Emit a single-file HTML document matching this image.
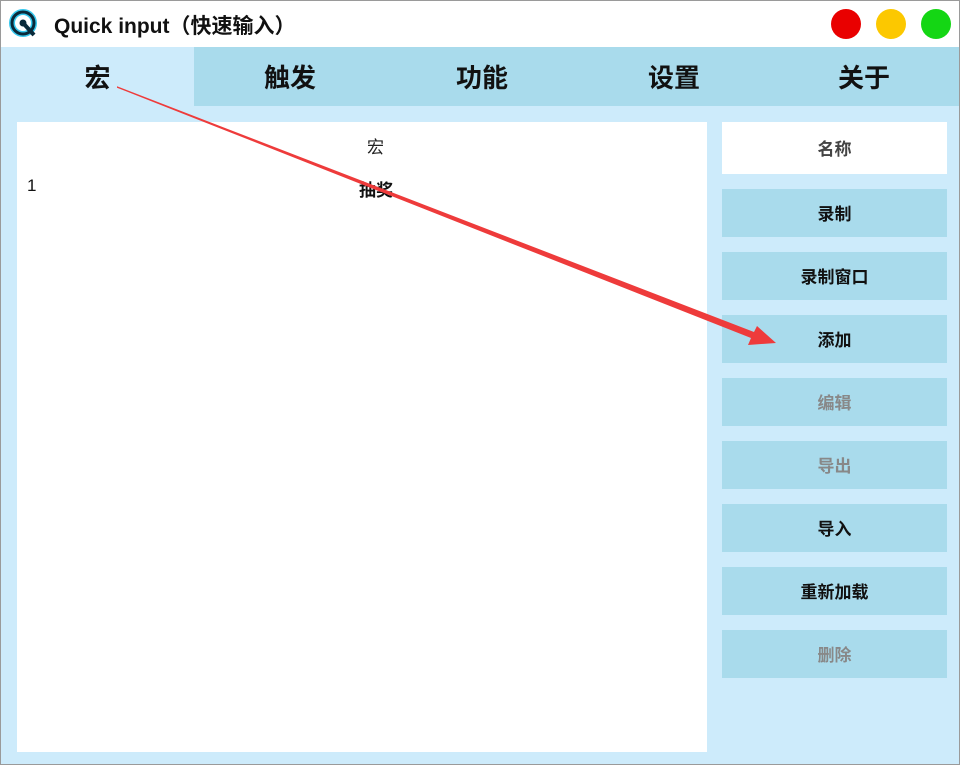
<!DOCTYPE html>
<html><head><meta charset="utf-8"><style>
body{margin:0;width:960px;height:765px;overflow:hidden;font-family:"Liberation Sans","Noto Sans CJK SC",sans-serif;background:#cdebfb;position:relative}
.frame{position:absolute;left:0;top:0;width:958px;height:763px;border:1px solid #9a9a9a;pointer-events:none}
.title{position:absolute;left:1px;top:1px;width:958px;height:46px;background:#fff}
.title span{position:absolute;left:53px;top:9px;font-size:21px;font-weight:bold;color:#111}
.dot{position:absolute;top:8px;width:30px;height:30px;border-radius:50%}
.tabs{position:absolute;left:1px;top:47px;width:958px;height:59px;background:#a9dbec}
.tab{position:absolute;top:0;height:59px;line-height:63px;text-align:center;font-size:26px;font-weight:bold;color:#111}
.table{position:absolute;left:17px;top:122px;width:690px;height:630px;background:#fff}
.btn{position:absolute;left:722px;width:225px;height:48px;background:#a9dbec;text-align:center;line-height:51px;font-size:17px;font-weight:bold;color:#111}
.dis{color:#888}
</style></head><body>
<div class="title">
<svg style="position:absolute;left:8px;top:8px" width="30" height="30" viewBox="0 0 30 30"><circle cx="14" cy="14" r="11" fill="none" stroke="#36c8ee" stroke-width="6"/><circle cx="14" cy="14" r="11" fill="none" stroke="#0a2a3a" stroke-width="3"/><circle cx="14" cy="14" r="3.5" fill="#0a2a3a"/><path d="M15 15 L25 26" stroke="#0a2a3a" stroke-width="4"/></svg>
<span>Quick input（快速输入）</span>
<div class="dot" style="left:830px;background:#e90000"></div>
<div class="dot" style="left:875px;background:#fcc800"></div>
<div class="dot" style="left:920px;background:#14d614"></div>
</div>
<div class="tabs">
<div class="tab" style="left:0;width:193px;background:#cdebfb">宏</div>
<div class="tab" style="left:193px;width:192px">触发</div>
<div class="tab" style="left:385px;width:192px">功能</div>
<div class="tab" style="left:577px;width:192px">设置</div>
<div class="tab" style="left:769px;width:188px">关于</div>
</div>
<div class="table">
<div style="position:absolute;left:350px;top:11px;font-size:17px;color:#222">宏</div>
<div style="position:absolute;left:10px;top:54px;font-size:17px;color:#111">1</div>
<div style="position:absolute;left:342px;top:54px;font-size:17px;font-weight:bold;color:#111">抽奖</div>
</div>
<div class="btn" style="top:122px;height:52px;line-height:56px;background:#fff;color:#444">名称</div>
<div class="btn" style="top:189px">录制</div>
<div class="btn" style="top:252px">录制窗口</div>
<div class="btn" style="top:315px">添加</div>
<div class="btn dis" style="top:378px">编辑</div>
<div class="btn dis" style="top:441px">导出</div>
<div class="btn" style="top:504px">导入</div>
<div class="btn" style="top:567px">重新加载</div>
<div class="btn dis" style="top:630px">删除</div>
<svg style="position:absolute;left:0;top:0" width="960" height="765"><polygon points="117,86.3 117,87.7 751,338 748,345 776,343 757,326 754,332" fill="#ee3b3b"/></svg>
<div class="frame"></div>
</body></html>
